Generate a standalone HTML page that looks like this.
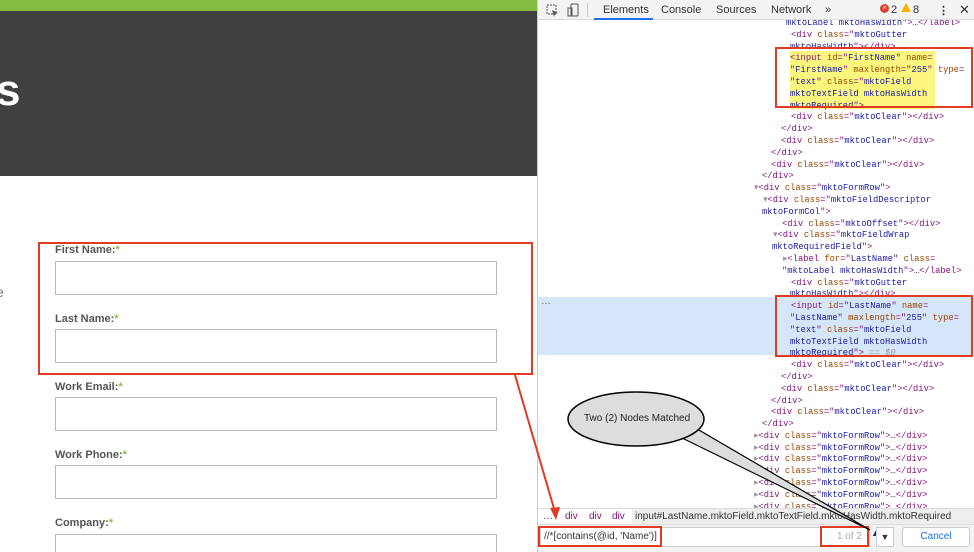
<!DOCTYPE html>
<html><head><meta charset="utf-8"><style>
*{margin:0;padding:0;box-sizing:border-box}
html,body{width:974px;height:552px;overflow:hidden}
body{position:relative;background:#fff;font-family:"Liberation Sans",sans-serif}
.a{position:absolute}
.lbl{position:absolute;left:55px;font-size:11px;font-weight:bold;color:#555}
.lbl i{color:#8cc04b;font-style:normal}
.inp{position:absolute;left:55px;width:442px;height:34px;border:1.5px solid #bbb;background:#fff}
.code{position:absolute;font-family:"Liberation Mono",monospace;font-size:8.8px;line-height:11.8px;white-space:pre;color:#881280}
.t{color:#881280}.n{color:#994500}.v{color:#1a1aa6}.g{color:#999}
.tab{position:absolute;top:4px;font-size:11px;color:#333}
</style></head><body>
<!-- left page -->
<div class="a" style="left:0;top:0;width:537px;height:11px;background:#84bd41"></div>
<div class="a" style="left:0;top:11px;width:537px;height:165px;background:#404040"></div>
<div class="a" style="left:-4px;top:66px;font-size:44px;font-weight:bold;color:#fff">s</div>
<div class="a" style="left:-4px;top:284px;font-size:14px;color:#777">e</div>
<div class="lbl" style="top:244px">First Name:<i>*</i></div>
<div class="inp" style="top:261px"></div>
<div class="lbl" style="top:313px">Last Name:<i>*</i></div>
<div class="inp" style="top:329px"></div>
<div class="lbl" style="top:381px">Work Email:<i>*</i></div>
<div class="inp" style="top:397px"></div>
<div class="lbl" style="top:449px">Work Phone:<i>*</i></div>
<div class="inp" style="top:465px"></div>
<div class="lbl" style="top:517px">Company:<i>*</i></div>
<div class="inp" style="top:534px"></div>
<div class="a" style="left:38px;top:242px;width:495px;height:133px;border:2px solid #e23b24"></div>
<div class="a" style="left:537px;top:0;width:1px;height:552px;background:#ccc"></div>
<!-- devtools -->
<div class="a" style="left:538px;top:0;width:436px;height:20px;background:#f3f3f3;border-bottom:1px solid #ddd;z-index:2">
 <svg class="a" style="left:8px;top:4px" width="13" height="13"><rect x="1" y="1" width="9" height="9" fill="none" stroke="#555" stroke-dasharray="2 1"/><path d="M6 6l6 3-3 1-1 3z" fill="#555"/></svg>
 <svg class="a" style="left:29px;top:3px" width="12" height="14"><rect x="4" y="1" width="7" height="12" rx="1" fill="none" stroke="#555"/><rect x="1" y="5" width="4" height="8" fill="none" stroke="#555"/></svg>
 <div class="a" style="left:49px;top:3px;width:1px;height:14px;background:#ccc"></div>
 <div class="tab" style="left:65px">Elements</div>
 <div class="a" style="left:56px;top:18px;width:59px;height:2px;background:#1a73e8"></div>
 <div class="tab" style="left:123px">Console</div>
 <div class="tab" style="left:178px">Sources</div>
 <div class="tab" style="left:233px">Network</div>
 <div class="tab" style="left:287px">»</div>
 <div class="a" style="left:342px;top:4px;width:9px;height:9px;border-radius:50%;background:#e0412e;color:#fff;font-size:7px;text-align:center;line-height:9px">×</div>
 <div class="tab" style="left:353px">2</div>
 <div class="a" style="left:363px;top:3px;width:0;height:0;border-left:5px solid transparent;border-right:5px solid transparent;border-bottom:9px solid #f4b400"></div>
 <div class="tab" style="left:375px">8</div>
 <div class="tab" style="left:400px;font-weight:bold">⋮</div>
 <div class="tab" style="left:421px;font-size:13px;top:2px">✕</div>
</div>
<div class="a" style="left:538px;top:297px;width:436px;height:58px;background:#d6e6f9"></div>
<div class="a" style="left:541px;top:296px;font-size:10px;color:#555">…</div>
<div class="a" style="left:790px;top:51px;width:145px;height:58px;background:#fbf77e"></div>
<div class="code" style="left:538px;top:18px"><span style="padding-left:248px" class="v">mktoLabel mktoHasWidth</span>"&gt;…&lt;/label&gt;
<span style="padding-left:253px">&lt;div <span class="n">class</span>="<span class="v">mktoGutter</span></span>
<span style="padding-left:252px" class="v">mktoHasWidth</span>"&gt;&lt;/div&gt;
<span style="padding-left:252px">&lt;input <span class="n">id</span>="<span class="v">FirstName</span>" <span class="n">name</span>=</span>
<span style="padding-left:252px">"<span class="v">FirstName</span>" <span class="n">maxlength</span>="<span class="v">255</span>" <span class="n">type</span>=</span>
<span style="padding-left:252px">"<span class="v">text</span>" <span class="n">class</span>="<span class="v">mktoField</span></span>
<span style="padding-left:252px" class="v">mktoTextField mktoHasWidth</span>
<span style="padding-left:252px"><span class="v">mktoRequired</span>"&gt;</span>
<span style="padding-left:253px">&lt;div <span class="n">class</span>="<span class="v">mktoClear</span>"&gt;&lt;/div&gt;</span>
<span style="padding-left:243px">&lt;/div&gt;</span>
<span style="padding-left:243px">&lt;div <span class="n">class</span>="<span class="v">mktoClear</span>"&gt;&lt;/div&gt;</span>
<span style="padding-left:233px">&lt;/div&gt;</span>
<span style="padding-left:233px">&lt;div <span class="n">class</span>="<span class="v">mktoClear</span>"&gt;&lt;/div&gt;</span>
<span style="padding-left:224px">&lt;/div&gt;</span>
<span style="padding-left:216px"><span class="g">▾</span>&lt;div <span class="n">class</span>="<span class="v">mktoFormRow</span>"&gt;</span>
<span style="padding-left:225px"><span class="g">▾</span>&lt;div <span class="n">class</span>="<span class="v">mktoFieldDescriptor</span></span>
<span style="padding-left:224px"><span class="v">mktoFormCol</span>"&gt;</span>
<span style="padding-left:244px">&lt;div <span class="n">class</span>="<span class="v">mktoOffset</span>"&gt;&lt;/div&gt;</span>
<span style="padding-left:235px"><span class="g">▾</span>&lt;div <span class="n">class</span>="<span class="v">mktoFieldWrap</span></span>
<span style="padding-left:234px"><span class="v">mktoRequiredField</span>"&gt;</span>
<span style="padding-left:245px"><span class="g">▸</span>&lt;label <span class="n">for</span>="<span class="v">LastName</span>" <span class="n">class</span>=</span>
<span style="padding-left:244px">"<span class="v">mktoLabel mktoHasWidth</span>"&gt;…&lt;/label&gt;</span>
<span style="padding-left:253px">&lt;div <span class="n">class</span>="<span class="v">mktoGutter</span></span>
<span style="padding-left:252px"><span class="v">mktoHasWidth</span>"&gt;&lt;/div&gt;</span>
<span style="padding-left:253px">&lt;input <span class="n">id</span>="<span class="v">LastName</span>" <span class="n">name</span>=</span>
<span style="padding-left:252px">"<span class="v">LastName</span>" <span class="n">maxlength</span>="<span class="v">255</span>" <span class="n">type</span>=</span>
<span style="padding-left:252px">"<span class="v">text</span>" <span class="n">class</span>="<span class="v">mktoField</span></span>
<span style="padding-left:252px" class="v">mktoTextField mktoHasWidth</span>
<span style="padding-left:252px"><span class="v">mktoRequired</span>"&gt; <span class="g">== <i>$0</i></span></span>
<span style="padding-left:253px">&lt;div <span class="n">class</span>="<span class="v">mktoClear</span>"&gt;&lt;/div&gt;</span>
<span style="padding-left:243px">&lt;/div&gt;</span>
<span style="padding-left:243px">&lt;div <span class="n">class</span>="<span class="v">mktoClear</span>"&gt;&lt;/div&gt;</span>
<span style="padding-left:233px">&lt;/div&gt;</span>
<span style="padding-left:233px">&lt;div <span class="n">class</span>="<span class="v">mktoClear</span>"&gt;&lt;/div&gt;</span>
<span style="padding-left:224px">&lt;/div&gt;</span>
<span style="padding-left:216px"><span class="g">▸</span>&lt;div <span class="n">class</span>="<span class="v">mktoFormRow</span>"&gt;…&lt;/div&gt;</span>
<span style="padding-left:216px"><span class="g">▸</span>&lt;div <span class="n">class</span>="<span class="v">mktoFormRow</span>"&gt;…&lt;/div&gt;</span>
<span style="padding-left:216px"><span class="g">▸</span>&lt;div <span class="n">class</span>="<span class="v">mktoFormRow</span>"&gt;…&lt;/div&gt;</span>
<span style="padding-left:216px"><span class="g">▸</span>&lt;div <span class="n">class</span>="<span class="v">mktoFormRow</span>"&gt;…&lt;/div&gt;</span>
<span style="padding-left:216px"><span class="g">▸</span>&lt;div <span class="n">class</span>="<span class="v">mktoFormRow</span>"&gt;…&lt;/div&gt;</span>
<span style="padding-left:216px"><span class="g">▸</span>&lt;div <span class="n">class</span>="<span class="v">mktoFormRow</span>"&gt;…&lt;/div&gt;</span>
<span style="padding-left:216px"><span class="g">▸</span>&lt;div <span class="n">class</span>="<span class="v">mktoFormRow</span>"&gt;…&lt;/div&gt;</span></div>
<div class="a" style="left:775px;top:47px;width:198px;height:61px;border:2px solid #e23b24"></div>
<div class="a" style="left:775px;top:295px;width:198px;height:62px;border:2px solid #e23b24"></div>
<!-- breadcrumb -->
<div class="a" style="left:538px;top:508px;width:436px;height:16px;background:#fff;border-top:1px solid #ddd;font-size:10px;line-height:16px;white-space:nowrap">
 <span class="a" style="left:5px;color:#333">…</span>
 <span class="a" style="left:27px;color:#881280">div</span>
 <span class="a" style="left:51px;color:#881280">div</span>
 <span class="a" style="left:74px;color:#881280">div</span>
 <span class="a" style="left:94px;width:342px;padding-left:3px;background:#eee;color:#333">input#LastName.mktoField.mktoTextField.mktoHasWidth.mktoRequired</span>
</div>
<div class="a" style="left:538px;top:524px;width:436px;height:28px;background:#f3f3f3;border-top:1px solid #ddd"></div>
<div class="a" style="left:540px;top:527px;width:330px;height:20px;background:#fff;border:1px solid #ccc"></div>
<div class="a" style="left:538px;top:526px;width:124px;height:21px;border:2px solid #e23b24;font-size:10px;line-height:17px;padding-left:4px;color:#333">//*[contains(@id, 'Name')]</div>
<div class="a" style="left:820px;top:526px;width:49px;height:21px;border:2px solid #e23b24;font-size:10px;line-height:17px;color:#aaa;text-align:right;padding-right:5px">1 of 2</div>
<div class="a" style="left:871px;top:528px;font-size:9px;color:#333">▲</div>
<div class="a" style="left:876px;top:527px;width:18px;height:20px;border:1px solid #ccc;background:#fff;font-size:9px;text-align:center;line-height:18px;color:#333">▼</div>
<div class="a" style="left:902px;top:527px;width:68px;height:20px;border:1px solid #ccc;border-radius:3px;background:#fff;font-size:10px;text-align:center;line-height:18px;color:#1a73e8">Cancel</div>
<!-- callout + arrow -->
<svg class="a" style="left:0;top:0" width="974" height="552">
 <path d="M678 436 L870 530 L692 426 Z" fill="#ddd" stroke="#000" stroke-width="1.2"/>
 <ellipse cx="636" cy="419" rx="68" ry="27" fill="#ddd" stroke="#000" stroke-width="1.5"/>
 <path d="M681 435 L694 428" stroke="#ddd" stroke-width="3"/>
 <line x1="515" y1="375" x2="555" y2="512" stroke="#e23b24" stroke-width="2"/>
 <path d="M556 520 L550 508 L560 507 Z" fill="#e23b24"/>
</svg>
<div class="a" style="left:584px;top:413px;font-size:10px;color:#222">Two (2) Nodes Matched</div>
</body></html>
